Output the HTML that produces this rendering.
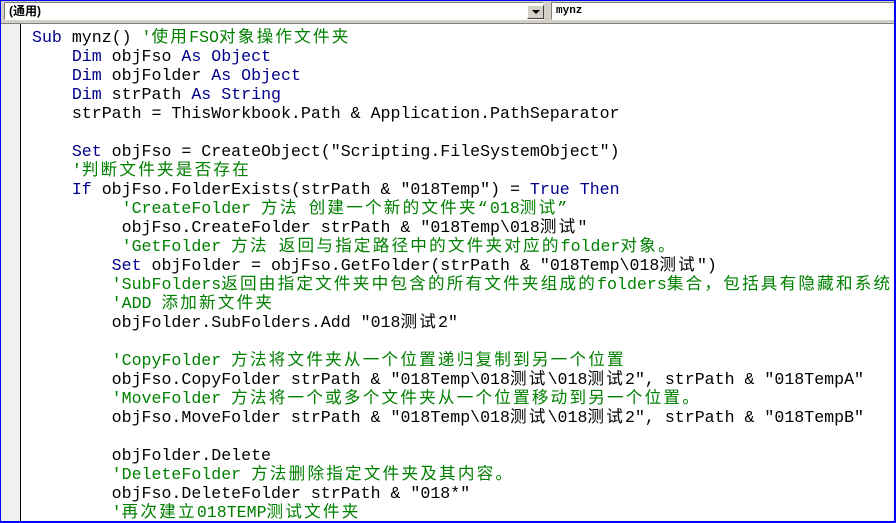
<!DOCTYPE html>
<html><head><meta charset="utf-8">
<style>
html,body{margin:0;padding:0;}
body{width:896px;height:523px;position:relative;overflow:hidden;background:#fff;}
#outer{position:absolute;left:0;top:0;border:1px solid #0000ff;border-right:2px solid #0000ff;border-bottom:2px solid #0000ff;box-sizing:border-box;width:896px;height:523px;}
#bar{position:absolute;left:1px;top:1px;width:893px;height:22px;background:#d4d0c8;border-bottom:1px solid #808080;}
.box{position:absolute;top:1px;height:18px;background:#fff;border-top:1px solid #808080;border-left:1px solid #808080;border-bottom:1px solid #fff;box-sizing:border-box;font:bold 11px "Liberation Mono","Noto Sans CJK SC",monospace;line-height:16px;padding-left:4px;color:#000;}
#b1{left:3px;width:539px;font-family:"Liberation Sans","Noto Sans CJK SC",sans-serif;font-size:12px;}
#b2{left:550px;width:343px;}
#btn{position:absolute;left:522px;top:2px;width:17px;height:14px;background:#d4d0c8;border:1px solid;border-color:#fff #404040 #404040 #fff;box-sizing:border-box;}
#btn:after{content:"";position:absolute;left:4px;top:4px;border-left:4px solid transparent;border-right:4px solid transparent;border-top:4px solid #000;}
#gut{position:absolute;left:1px;top:24px;width:19px;height:497px;background:#f0f0f0;border-right:1px solid #000;}
#code{position:absolute;left:21px;top:24px;width:873px;height:497px;overflow:hidden;}
.l{position:absolute;left:11px;white-space:pre;font:16.6px/19px "Liberation Mono","Noto Sans CJK SC",monospace;color:#000;}
.b{color:#00008b}
.g{color:#008000}
.k{letter-spacing:2.2px}
</style></head><body>
<div id="outer"></div>
<div id="bar">
<div class="box" id="b1">(通用)<div id="btn"></div></div>
<div class="box" id="b2">mynz</div>
</div>
<div id="gut"></div>
<div id="code">
<div class="l" style="top:4px"><span class="b">Sub</span> mynz() <span class="g">'<span class="k">使用</span>FSO<span class="k">对象操作文件夹</span></span></div>
<div class="l" style="top:23px">    <span class="b">Dim</span> objFso <span class="b">As</span> <span class="b">Object</span></div>
<div class="l" style="top:42px">    <span class="b">Dim</span> objFolder <span class="b">As</span> <span class="b">Object</span></div>
<div class="l" style="top:61px">    <span class="b">Dim</span> strPath <span class="b">As</span> <span class="b">String</span></div>
<div class="l" style="top:80px">    strPath = ThisWorkbook.Path &amp; Application.PathSeparator</div>
<div class="l" style="top:118px">    <span class="b">Set</span> objFso = CreateObject("Scripting.FileSystemObject")</div>
<div class="l" style="top:137px">    <span class="g">'<span class="k">判断文件夹是否存在</span></span></div>
<div class="l" style="top:156px">    <span class="b">If</span> objFso.FolderExists(strPath &amp; "018Temp") = <span class="b">True</span> <span class="b">Then</span></div>
<div class="l" style="top:175px">         <span class="g">'CreateFolder <span class="k">方法</span> <span class="k">创建一个新的文件夹“</span>018<span class="k">测试”</span></span></div>
<div class="l" style="top:194px">         objFso.CreateFolder strPath &amp; "018Temp\018<span class="k">测试</span>"</div>
<div class="l" style="top:213px">         <span class="g">'GetFolder <span class="k">方法</span> <span class="k">返回与指定路径中的文件夹对应的</span>folder<span class="k">对象。</span></span></div>
<div class="l" style="top:232px">        <span class="b">Set</span> objFolder = objFso.GetFolder(strPath &amp; "018Temp\018<span class="k">测试</span>")</div>
<div class="l" style="top:251px">        <span class="g">'SubFolders<span class="k">返回由指定文件夹中包含的所有文件夹组成的</span>folders<span class="k">集合，包括具有隐藏和系统</span></span></div>
<div class="l" style="top:270px">        <span class="g">'ADD <span class="k">添加新文件夹</span></span></div>
<div class="l" style="top:289px">        objFolder.SubFolders.Add "018<span class="k">测试</span>2"</div>
<div class="l" style="top:327px">        <span class="g">'CopyFolder <span class="k">方法将文件夹从一个位置递归复制到另一个位置</span></span></div>
<div class="l" style="top:346px">        objFso.CopyFolder strPath &amp; "018Temp\018<span class="k">测试</span>\018<span class="k">测试</span>2", strPath &amp; "018TempA"</div>
<div class="l" style="top:365px">        <span class="g">'MoveFolder <span class="k">方法将一个或多个文件夹从一个位置移动到另一个位置。</span></span></div>
<div class="l" style="top:384px">        objFso.MoveFolder strPath &amp; "018Temp\018<span class="k">测试</span>\018<span class="k">测试</span>2", strPath &amp; "018TempB"</div>
<div class="l" style="top:422px">        objFolder.Delete</div>
<div class="l" style="top:441px">        <span class="g">'DeleteFolder <span class="k">方法删除指定文件夹及其内容。</span></span></div>
<div class="l" style="top:460px">        objFso.DeleteFolder strPath &amp; "018*"</div>
<div class="l" style="top:479px">        <span class="g">'<span class="k">再次建立</span>018TEMP<span class="k">测试文件夹</span></span></div>
</div>
</body></html>
